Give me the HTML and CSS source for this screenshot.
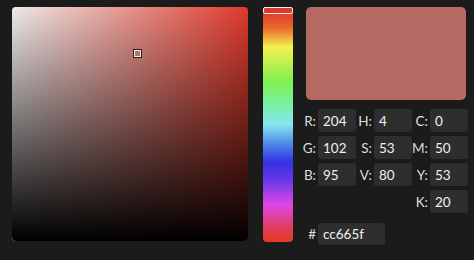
FILE: index.html
```html
<!DOCTYPE html>
<html lang="en">
<head>
  <meta charset="UTF-8" />
  <title>Color picker</title>
  <link rel="stylesheet" href="styles.css">
</head>
<body>
  <div class="picker">
    <div class="sat">
      <div class="sat-white"></div>
      <div class="sat-black"></div>
      <div class="cursor"></div>
    </div>
    <div class="hue">
      <div class="hue-mark"></div>
    </div>
    <div class="panel">
      <div class="preview"></div>
      <div class="fields">
        <label>R:</label><div class="field">204</div>
        <label>H:</label><div class="field">4</div>
        <label>C:</label><div class="field">0</div>
        <label>G:</label><div class="field">102</div>
        <label>S:</label><div class="field">53</div>
        <label>M:</label><div class="field">50</div>
        <label>B:</label><div class="field">95</div>
        <label>V:</label><div class="field">80</div>
        <label>Y:</label><div class="field">53</div>
        <label class="k">K:</label><div class="field">20</div>
      </div>
      <div class="hex">
        <label>#</label><div class="field">cc665f</div>
      </div>
    </div>
  </div>
</body>
</html>
```

FILE: styles.css
```css
body {
  margin: 0;
  background: #1c1b1c;
  font-family: 'Lato', 'Open Sans', sans-serif;
  color: #dedede;
  font-size: 13.5px;
}
.picker {
  display: flex;
  padding: 7px 0 0 12px;
}
.sat {
  position: relative;
  width: 236px;
  height: 234px;
  border-radius: 4px;
  overflow: hidden;
  background: #de3a2b;
}
.sat-white,
.sat-black {
  position: absolute;
  inset: 0;
}
.sat-white {
  background: linear-gradient(to right, #eeeaea, rgba(238,234,234,0));
}
.sat-black {
  background: linear-gradient(to bottom, rgba(0,0,0,0), #000);
}
.cursor {
  position: absolute;
  left: 122px;
  top: 43px;
  width: 5px;
  height: 5px;
  border: 1px solid #eee;
  outline: 1.5px solid #222;
}
.hue {
  position: relative;
  margin-left: 15px;
  width: 30px;
  height: 235px;
  border-radius: 4px;
  background: linear-gradient(to bottom,
    #e23a2c 2%, #e86a2c 9%, #f4f150 17%, #7ef04e 32%, #78f0a8 42%,
    #88e6f0 50%, #4f8ce8 58%, #3431e4 66%, #6a38e6 74%, #de46e8 84%, #e23a2c 98%);
}
.hue-mark {
  position: absolute;
  left: 0;
  right: 0;
  top: 0;
  height: 5px;
  border: 1px solid #eee;
  border-radius: 2px;
  background: #de3a2b;
}
.panel {
  margin-left: 7px;
  width: 168px;
}
.preview {
  margin-left: 6px;
  width: 160px;
  height: 93px;
  border-radius: 5px;
  background: #b46a63;
}
.fields {
  margin-top: 9px;
  display: grid;
  grid-template-columns: repeat(3, 18px 38px);
  grid-auto-rows: 23px;
  row-gap: 4px;
}
.fields label,
.hex label {
  display: flex;
  align-items: center;
  justify-content: flex-end;
  padding-right: 2px;
}
.fields .k {
  grid-column: 5;
}
.field {
  background: #2f2e2f;
  border-radius: 3px;
  display: flex;
  align-items: center;
  padding-left: 5px;
  color: #f0f0f0;
}
.hex {
  margin-top: 10px;
  display: flex;
  height: 22px;
}
.hex label {
  width: 16px;
}
.hex .field {
  width: 62px;
}
```
